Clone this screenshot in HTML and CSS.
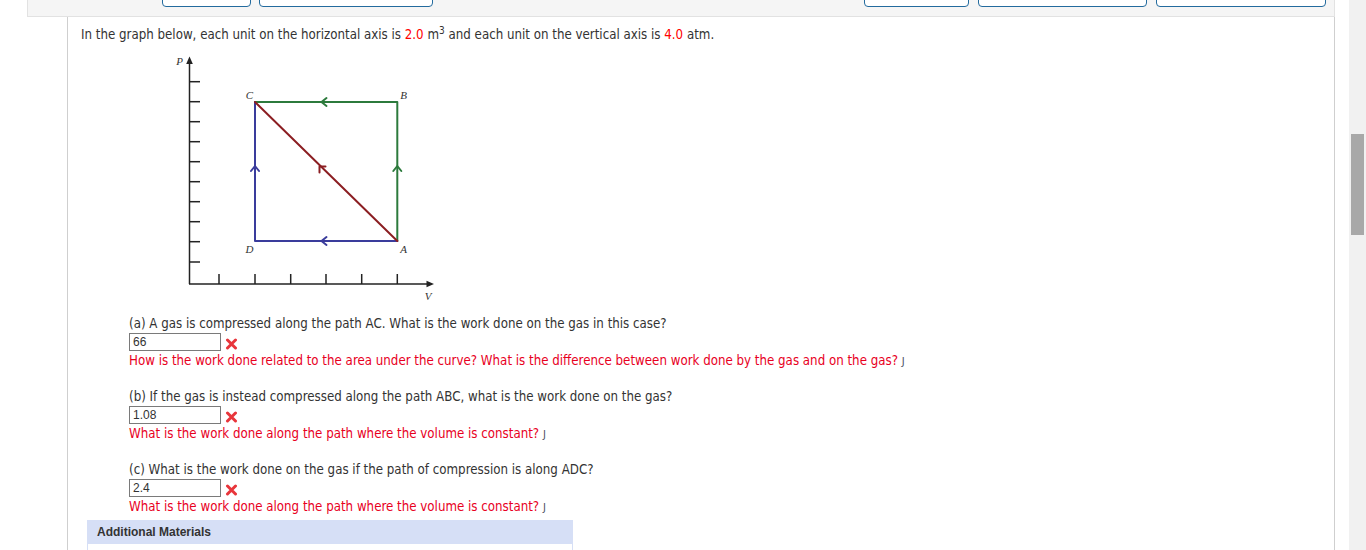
FILE: index.html
```html
<!DOCTYPE html>
<html>
<head>
<meta charset="utf-8">
<link rel="stylesheet" href="styles.css">
</head>
<body>
<div class="screen">
  <div class="main">
    <div class="topbar">
      <div class="btn-group left">
        <span class="btn b1"></span>
        <span class="btn b2"></span>
      </div>
      <div class="btn-group right">
        <span class="btn b3"></span>
        <span class="btn b4"></span>
        <span class="btn b5"></span>
      </div>
    </div>
    <div class="panel">
      <p class="intro">In the graph below, each unit on the horizontal axis is <span class="red">2.0</span> m<sup>3</sup> and each unit on the vertical axis is <span class="red">4.0</span> atm.</p>
      <svg class="graph" width="290" height="262" viewBox="160 48 290 262">
        <g class="axes" stroke="#222" stroke-width="1.5" fill="none">
          <line x1="189.5" y1="284" x2="189.5" y2="62"/>
          <line x1="189" y1="284" x2="428" y2="284"/>
          <line x1="189" y1="81.7" x2="200" y2="81.7"/>
          <line x1="189" y1="101.7" x2="200" y2="101.7"/>
          <line x1="189" y1="121.7" x2="200" y2="121.7"/>
          <line x1="189" y1="141.7" x2="200" y2="141.7"/>
          <line x1="189" y1="161.7" x2="200" y2="161.7"/>
          <line x1="189" y1="181.7" x2="200" y2="181.7"/>
          <line x1="189" y1="201.7" x2="200" y2="201.7"/>
          <line x1="189" y1="221.7" x2="200" y2="221.7"/>
          <line x1="189" y1="241.7" x2="200" y2="241.7"/>
          <line x1="189" y1="262" x2="200" y2="262"/>
          <line x1="219" y1="284" x2="219" y2="274"/>
          <line x1="255" y1="284" x2="255" y2="274"/>
          <line x1="290.7" y1="284" x2="290.7" y2="274"/>
          <line x1="326" y1="284" x2="326" y2="274"/>
          <line x1="361.7" y1="284" x2="361.7" y2="274"/>
          <line x1="397.3" y1="284" x2="397.3" y2="274"/>
        </g>
        <polygon points="189.5,56.5 186.2,64 192.8,64" fill="#222"/>
        <polygon points="434,284 426.5,280.7 426.5,287.3" fill="#222"/>
        <g stroke-width="2" fill="none" stroke-linecap="round" stroke-linejoin="round">
          <polyline points="255,102 397.3,102 397.3,241" stroke="#2c7a3c"/>
          <polyline points="255,102 255,241 397.3,241" stroke="#3a3c9c"/>
          <line x1="397.3" y1="241" x2="255" y2="102" stroke="#8b1e22"/>
          <polyline points="326.5,98 321.5,102 326.5,106" stroke="#2c7a3c"/>
          <polyline points="393.3,171 397.3,166 401.3,171" stroke="#2c7a3c"/>
          <polyline points="251,171 255,166 259,171" stroke="#3a3c9c"/>
          <polyline points="326.5,237 321.5,241 326.5,245" stroke="#3a3c9c"/>
          <polyline points="325.5,166.5 319.5,166.5 319.5,172.5" stroke="#8b1e22"/>
        </g>
        <g class="lbl">
          <text x="179.5" y="65">P</text>
          <text x="249.5" y="98.5">C</text>
          <text x="403.5" y="98.5">B</text>
          <text x="249.5" y="253">D</text>
          <text x="403.5" y="253">A</text>
          <text x="428" y="300">V</text>
        </g>
      </svg>

      <div class="questions">
        <div class="q">
          <p class="qtext">(a) A gas is compressed along the path AC. What is the work done on the gas in this case?</p>
          <div class="answer"><span class="field">66</span><svg class="xmark" width="13" height="12" viewBox="0 0 13 12"><path d="M2.5 2 L10.5 10 M10.5 2 L2.5 10" stroke="#e8353b" stroke-width="3" stroke-linecap="round"/></svg></div>
          <p class="hint">How is the work done related to the area under the curve? What is the difference between work done by the gas and on the gas? <span class="jmark">J</span></p>
        </div>
        <div class="q">
          <p class="qtext">(b) If the gas is instead compressed along the path ABC, what is the work done on the gas?</p>
          <div class="answer"><span class="field">1.08</span><svg class="xmark" width="13" height="12" viewBox="0 0 13 12"><path d="M2.5 2 L10.5 10 M10.5 2 L2.5 10" stroke="#e8353b" stroke-width="3" stroke-linecap="round"/></svg></div>
          <p class="hint">What is the work done along the path where the volume is constant? <span class="jmark">J</span></p>
        </div>
        <div class="q">
          <p class="qtext">(c) What is the work done on the gas if the path of compression is along ADC?</p>
          <div class="answer"><span class="field">2.4</span><svg class="xmark" width="13" height="12" viewBox="0 0 13 12"><path d="M2.5 2 L10.5 10 M10.5 2 L2.5 10" stroke="#e8353b" stroke-width="3" stroke-linecap="round"/></svg></div>
          <p class="hint">What is the work done along the path where the volume is constant? <span class="jmark">J</span></p>
        </div>
      </div>

      <div class="materials">
        <div class="materials-head">Additional Materials</div>
        <div class="materials-body"></div>
      </div>
    </div>
  </div>
  <div class="scrollbar"><div class="thumb"></div></div>
</div>
</body>
</html>
```
FILE: styles.css
```css
* { box-sizing: border-box; }
html, body { margin: 0; padding: 0; background: #fff; }
body { height: 550px; overflow: hidden; font-family: "DejaVu Sans Condensed", "DejaVu Sans", sans-serif; font-size: 13.2px; color: #333; }
.screen { display: flex; height: 550px; }
.main { flex: 1; min-width: 0; }
.topbar {
  margin-left: 27px; width: 1308px; height: 17px;
  background: #f5f5f5; border: 1px solid #e2e2e2; border-top: 0;
  display: flex; justify-content: space-between; align-items: flex-start;
}
.btn-group { display: flex; gap: 8px; }
.btn-group.left { margin-left: 134px; }
.btn-group.right { margin-right: 8px; gap: 8px; }
.btn { display: block; height: 25px; margin-top: -18px; border: 1px solid #236b9e; border-radius: 4px; background: #fff; }
.b1 { width: 89px; }
.b2 { width: 174px; }
.b3 { width: 105px; }
.b4 { width: 169px; margin-left: 1px; }
.b5 { width: 170px; margin-left: 1px; }
.panel {
  margin-left: 67px; width: 1268px; height: 540px;
  border-left: 1px solid #cfcfcf; border-right: 1px solid #cfcfcf;
  padding: 10px 0 0 13px;
}
p { margin: 0; }
.intro { line-height: 16px; }
.intro sup { font-size: 10px; line-height: 0; vertical-align: 5px; }
.red { color: #f00; }
.graph { display: block; margin: 5px 0 0 79px; }
.lbl text { font-family: "Liberation Serif", serif; font-style: italic; font-size: 11px; fill: #333; text-anchor: middle; }
.questions { margin: 6px 0 0 48px; }
.q { margin-bottom: 19px; }
.q:last-child { margin-bottom: 0; }
.qtext { line-height: 16px; }
.answer { display: flex; align-items: flex-start; margin-top: 1px; height: 18px; }
.field {
  display: block; width: 92px; height: 18px; border: 1px solid #7a7a7a;
  font-family: "Liberation Sans", Arial, sans-serif; font-size: 12px; line-height: 16px;
  padding-left: 3px; color: #333;
}
.xmark { display: block; margin: 5px 0 0 4px; }
.hint { color: #e8001e; line-height: 16px; margin-top: 2px; }
.jmark { color: #4a5060; font-size: 11px; }
.materials { margin: 4px 0 0 6px; width: 486px; }
.materials-head {
  height: 24px; background: #d6dff6; padding-left: 10px;
  font-family: "Liberation Sans", Arial, sans-serif; font-weight: bold; font-size: 12px; line-height: 25px; color: #333;
}
.materials-body { height: 30px; border: 1px solid #d6dff6; border-top: 0; }
.scrollbar { width: 17px; background: #f1f1f1; padding: 134px 2px 0 2px; }
.thumb { height: 101px; background: #a8a8a8; }
```
